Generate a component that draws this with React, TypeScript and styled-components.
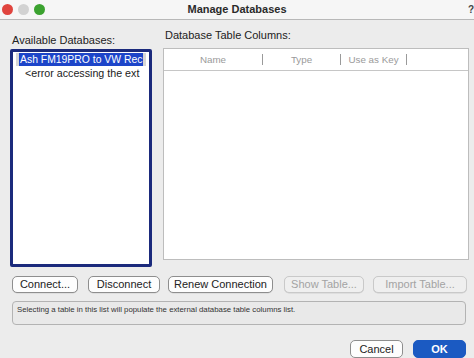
import React from "react";
import styled, { createGlobalStyle } from "styled-components";

const Global = createGlobalStyle`
  html, body { margin: 0; padding: 0; }
  body { width: 474px; height: 358px; overflow: hidden; background: #ececec; font-family: "Liberation Sans", Arial, sans-serif; }
`;

const Window = styled.div`
  width: 474px;
  height: 358px;
  background: #ececec;
  display: flex;
  flex-direction: column;
  color: #222;
`;

const TitleBar = styled.div`
  height: 18px;
  background: #f6f6f6;
  border-bottom: 1px solid #b8b8b8;
  display: flex;
  align-items: center;
  position: relative;
  padding: 0 0 1px 2px;
`;

const Lights = styled.div`
  display: flex;
  gap: 5px;
  align-items: center;
`;

const Light = styled.span<{ $c: string }>`
  width: 11px;
  height: 11px;
  border-radius: 50%;
  background: ${(p) => p.$c};
`;

const Title = styled.div`
  position: absolute;
  left: 0;
  right: 0;
  text-align: center;
  font-size: 11px;
  font-weight: bold;
  color: #2a2a2a;
  pointer-events: none;
`;

const Help = styled.div`
  position: absolute;
  right: 0;
  font-size: 10px;
  font-weight: bold;
  color: #444;
`;

const Body = styled.div`
  flex: 1;
  display: flex;
  flex-direction: column;
  padding: 0 5px 0 10px;
`;

const Main = styled.div`
  display: flex;
  gap: 11px;
  align-items: flex-start;
`;

const LeftCol = styled.div`
  width: 142px;
  display: flex;
  flex-direction: column;
`;

const RightCol = styled.div`
  flex: 1;
  display: flex;
  flex-direction: column;
`;

const Label = styled.div<{ $top: number }>`
  font-size: 11px;
  line-height: 13px;
  color: #222;
  margin-top: ${(p) => p.$top}px;
  padding-left: 2px;
`;

const ListBox = styled.div`
  margin-top: 2px;
  height: 210px;
  border: 3px solid #1b2a7c;
  border-radius: 2px;
  background: #fff;
  padding: 1px 2px;
  display: flex;
  flex-direction: column;
`;

const ListRow = styled.div<{ $sel?: boolean }>`
  height: 13px;
  line-height: 13px;
  font-size: ${(p) => (p.$sel ? "10.4px" : "10.7px")};
  white-space: nowrap;
  overflow: hidden;
  padding-left: ${(p) => (p.$sel ? "1px" : "10px")};
  margin: ${(p) => (p.$sel ? "0 1px" : "1px 0 0")};
  background: ${(p) => (p.$sel ? "#1d45c9" : "transparent")};
  color: ${(p) => (p.$sel ? "#fff" : "#222")};
  border-left: ${(p) => (p.$sel ? "3px solid #d6d6d6" : "none")};
  border-right: ${(p) => (p.$sel ? "3px solid #d6d6d6" : "none")};
`;

const Table = styled.div`
  margin-top: 6px;
  height: 210px;
  border: 1px solid #bdbdbd;
  background: #fff;
  display: flex;
  flex-direction: column;
`;

const HeaderRow = styled.div`
  height: 21px;
  border-bottom: 1px solid #c6c6c6;
  display: grid;
  grid-template-columns: 99px 78px 66px 1fr;
  align-items: center;
`;

const HeaderCell = styled.div<{ $sep?: boolean }>`
  font-size: 9.8px;
  color: #9a9a9a;
  text-align: center;
  height: 11px;
  line-height: 11px;
  border-right: ${(p) => (p.$sep ? "1px solid #9a9a9a" : "none")};
`;

const ButtonRow = styled.div`
  display: flex;
  margin-top: 9px;
  padding-left: 2px;
`;

const Btn = styled.button<{ $w: number; $ml: number; $disabled?: boolean }>`
  width: ${(p) => p.$w}px;
  margin-left: ${(p) => p.$ml}px;
  height: 17px;
  padding: 0;
  font-family: "Liberation Sans", Arial, sans-serif;
  font-size: 11px;
  line-height: 15px;
  background: ${(p) => (p.$disabled ? "#efefef" : "#fdfdfd")};
  color: ${(p) => (p.$disabled ? "#a3a3a3" : "#222")};
  border: 1px solid ${(p) => (p.$disabled ? "#c9c9c9" : "#8e8e8e")};
  border-radius: 5px;
  box-shadow: 0 0.5px 0.5px rgba(0, 0, 0, 0.12);
`;

const InfoBox = styled.div`
  margin: 8px 3px 0 2px;
  height: 20px;
  border: 1px solid #b3b3b3;
  border-radius: 4px;
  background: #e9e9e9;
  font-size: 7.8px;
  line-height: 12px;
  padding: 2px 0 0 4px;
  color: #333;
`;

const Footer = styled.div`
  display: flex;
  justify-content: flex-end;
  gap: 10px;
  margin-top: 15px;
  padding-right: 3px;
`;

const FooterBtn = styled.button<{ $primary?: boolean }>`
  width: 53px;
  height: 18px;
  padding: 0;
  font-family: "Liberation Sans", Arial, sans-serif;
  font-size: 11px;
  border-radius: 5px;
  background: ${(p) => (p.$primary ? "#1b5ac2" : "#fdfdfd")};
  color: ${(p) => (p.$primary ? "#fff" : "#222")};
  border: 1px solid ${(p) => (p.$primary ? "#1b5ac2" : "#8e8e8e")};
  font-weight: ${(p) => (p.$primary ? "bold" : "normal")};
`;

export default function App() {
  return (
    <Window>
      <Global />
      <TitleBar>
        <Lights>
          <Light $c="#e0443e" />
          <Light $c="#d2d2d2" />
          <Light $c="#3ba22f" />
        </Lights>
        <Title>Manage Databases</Title>
        <Help>?</Help>
      </TitleBar>
      <Body>
        <Main>
          <LeftCol>
            <Label $top={14}>Available Databases:</Label>
            <ListBox>
              <ListRow $sel>Ash FM19PRO to VW Rec</ListRow>
              <ListRow>&lt;error accessing the ext</ListRow>
            </ListBox>
          </LeftCol>
          <RightCol>
            <Label $top={9}>Database Table Columns:</Label>
            <Table>
              <HeaderRow>
                <HeaderCell $sep>Name</HeaderCell>
                <HeaderCell $sep>Type</HeaderCell>
                <HeaderCell $sep>Use as Key</HeaderCell>
                <HeaderCell />
              </HeaderRow>
            </Table>
          </RightCol>
        </Main>
        <ButtonRow>
          <Btn $w={66} $ml={0}>Connect...</Btn>
          <Btn $w={72} $ml={10}>Disconnect</Btn>
          <Btn $w={105} $ml={8}>Renew Connection</Btn>
          <Btn $w={80} $ml={11} $disabled>Show Table...</Btn>
          <Btn $w={94} $ml={9} $disabled>Import Table...</Btn>
        </ButtonRow>
        <InfoBox>Selecting a table in this list will populate the external database table columns list.</InfoBox>
        <Footer>
          <FooterBtn>Cancel</FooterBtn>
          <FooterBtn $primary>OK</FooterBtn>
        </Footer>
      </Body>
    </Window>
  );
}
